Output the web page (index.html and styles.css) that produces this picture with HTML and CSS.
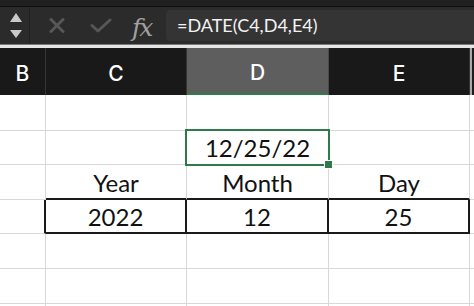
FILE: index.html
```html
<!DOCTYPE html>
<html>
<head>
<meta charset="utf-8">
<link rel="stylesheet" href="styles.css">
</head>
<body>
<div class="app">
  <div class="topstrip"></div>
  <div class="fbar">
    <div class="spin">
      <svg width="14" height="26" viewBox="0 0 14 26"><polygon points="7,0 13,9 1,9" fill="#c9c9c9"/><polygon points="1,17 13,17 7,25" fill="#c9c9c9"/></svg>
    </div>
    <div class="icons">
      <svg class="x" width="16" height="15" viewBox="0 0 16 15"><path d="M2 1.5 L14 13.5 M14 1.5 L2 13.5" stroke="#575757" stroke-width="3" stroke-linecap="round"/></svg>
      <svg class="check" width="22" height="15" viewBox="0 0 22 15"><path d="M2 7.5 L8 13 L20 2" stroke="#575757" stroke-width="3" fill="none" stroke-linecap="round" stroke-linejoin="round"/></svg>
      <span class="fx">fx</span>
    </div>
    <div class="input">=DATE(C4,D4,E4)</div>
  </div>
  <div class="sep"></div>
  <div class="grid">
    <div class="h">B</div><div class="h">C</div><div class="h sel">D</div><div class="h">E</div><div class="h last"></div>

    <div class="c"></div><div class="c"></div><div class="c"></div><div class="c"></div><div class="c last"></div>

    <div class="c"></div><div class="c"></div><div class="c active"><span>12/25/22</span><div class="selbox"><div class="handle"></div></div></div><div class="c"></div><div class="c last"></div>

    <div class="c"></div><div class="c bb">Year</div><div class="c bb">Month</div><div class="c bb">Day</div><div class="c last"></div>

    <div class="c br"></div><div class="c bb br">2022</div><div class="c bb br">12</div><div class="c bb br">25</div><div class="c last"></div>

    <div class="c"></div><div class="c"></div><div class="c"></div><div class="c"></div><div class="c last"></div>

    <div class="c"></div><div class="c"></div><div class="c"></div><div class="c"></div><div class="c last"></div>

    <div class="c"></div><div class="c"></div><div class="c"></div><div class="c"></div><div class="c last"></div>
  </div>
</div>
</body>
</html>
```
FILE: styles.css
```css
html, body { margin: 0; padding: 0; background: #fff; }
.app { width: 474px; height: 306px; overflow: hidden; position: relative; }
.topstrip { height: 6px; background: #202020; border-bottom: 1px solid #0e0e0e; }
.fbar { height: 37px; background: #2b2b2b; display: flex; align-items: center; }
.spin { width: 30px; height: 37px; box-sizing: border-box; border-right: 1px solid #222; display: flex; align-items: center; justify-content: center; padding-left: 3px; }
.icons { width: 136px; display: flex; align-items: center; height: 37px; }
.x { margin-left: 19px; }
.check { margin-left: 25px; }
.fx { margin-left: 20px; font-family: "DejaVu Serif", "Liberation Serif", serif; font-style: italic; font-size: 25px; color: #a0a0a0; letter-spacing: -2px; line-height: 1; margin-top: 4px; }
.input { flex: 1; height: 31px; background: #343434; border-radius: 4px 0 0 4px; color: #f2f2f2; font-family: Lato, "Open Sans", sans-serif; font-size: 18px; line-height: 31px; padding-left: 11px; }
.sep { height: 4px; background: #e6e6e6; border-top: 1px solid #7a7a7a; box-sizing: border-box; }
.grid { display: grid; grid-template-columns: 46px 141px 142px 141px 4px; grid-template-rows: 47px 36px 34px 35px 34px 35px 35px 35px; }
.h { background: #191919; color: #fff; font-family: Inter, "Liberation Sans", sans-serif; font-weight: 500; font-size: 21px; display: flex; align-items: center; justify-content: center; padding-top: 4px; box-sizing: border-box; border-right: 1px solid #353535; }
.h.sel { background: #5e5e5e; border-bottom: 2px solid #2f7d4c; border-right: 1px solid #4a4a4a; }
.h.last { background: #1c1c1c; border-left: 2px solid #a8a8a8; border-right: none; }
.c { box-sizing: border-box; border-right: 1px solid #d8d8d8; border-bottom: 1px solid #d8d8d8; font-family: Lato, "Open Sans", sans-serif; font-size: 24px; color: #111; display: flex; align-items: flex-end; justify-content: center; padding-bottom: 3px; line-height: 1; }
.c.last { border-right: none; }
.c.bb { border-bottom: 2px solid #1a1a1a; }
.c.br { border-right: 2px solid #1a1a1a; }
.c.active { position: relative; padding-bottom: 4px; }
.selbox { position: absolute; left: -2px; top: -2px; width: 145px; height: 37px; box-sizing: border-box; border: 2px solid #2e7a4b; }
.handle { position: absolute; right: -5px; bottom: -5px; width: 7px; height: 7px; background: #2e7a4b; border: 1px solid #fff; }
```
